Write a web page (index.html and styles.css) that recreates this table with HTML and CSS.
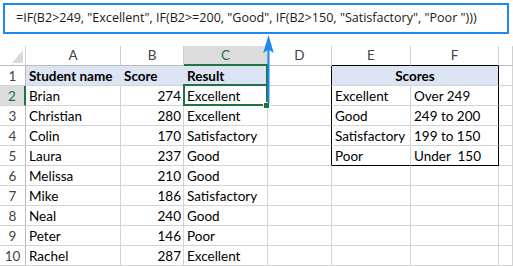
FILE: index.html
```html
<!DOCTYPE html>
<html>
<head>
<meta charset="utf-8">
<link rel="stylesheet" href="styles.css">
</head>
<body>
<div class="page">
  <div class="formula">=IF(B2&gt;249, "Excellent", IF(B2&gt;=200, "Good", IF(B2&gt;150, "Satisfactory", "Poor ")))</div>
  <div class="sheet">
    <div class="c hd corner"><span class="tri"></span></div>
    <div class="c hd">A</div>
    <div class="c hd">B</div>
    <div class="c hd sel-h">C</div>
    <div class="c hd">D</div>
    <div class="c hd bx-b">E</div>
    <div class="c hd bx-b">F</div>
    <div class="c hd"></div>

    <div class="c rh">1</div>
    <div class="c fill b nr">Student name</div>
    <div class="c fill b nr">Score</div>
    <div class="c fill b">Result</div>
    <div class="c bx-r"></div>
    <div class="c fill b ctr span2 bx-r">Scores</div>
    <div class="c"></div>

    <div class="c rh sel-r">2</div>
    <div class="c">Brian</div>
    <div class="c num">274</div>
    <div class="c">Excellent</div>
    <div class="c bx-r"></div>
    <div class="c">Excellent</div>
    <div class="c bx-r">Over 249</div>
    <div class="c"></div>

    <div class="c rh">3</div>
    <div class="c">Christian</div>
    <div class="c num">280</div>
    <div class="c">Excellent</div>
    <div class="c bx-r"></div>
    <div class="c">Good</div>
    <div class="c bx-r">249 to 200</div>
    <div class="c"></div>

    <div class="c rh">4</div>
    <div class="c">Colin</div>
    <div class="c num">170</div>
    <div class="c">Satisfactory</div>
    <div class="c bx-r"></div>
    <div class="c">Satisfactory</div>
    <div class="c bx-r">199 to 150</div>
    <div class="c"></div>

    <div class="c rh">5</div>
    <div class="c">Laura</div>
    <div class="c num">237</div>
    <div class="c">Good</div>
    <div class="c bx-r"></div>
    <div class="c bx-b">Poor</div>
    <div class="c bx-r bx-b">Under  150</div>
    <div class="c"></div>

    <div class="c rh">6</div>
    <div class="c">Melissa</div>
    <div class="c num">210</div>
    <div class="c">Good</div>
    <div class="c"></div>
    <div class="c"></div>
    <div class="c"></div>
    <div class="c"></div>

    <div class="c rh">7</div>
    <div class="c">Mike</div>
    <div class="c num">186</div>
    <div class="c">Satisfactory</div>
    <div class="c"></div>
    <div class="c"></div>
    <div class="c"></div>
    <div class="c"></div>

    <div class="c rh">8</div>
    <div class="c">Neal</div>
    <div class="c num">240</div>
    <div class="c">Good</div>
    <div class="c"></div>
    <div class="c"></div>
    <div class="c"></div>
    <div class="c"></div>

    <div class="c rh">9</div>
    <div class="c">Peter</div>
    <div class="c num">146</div>
    <div class="c">Poor</div>
    <div class="c"></div>
    <div class="c"></div>
    <div class="c"></div>
    <div class="c"></div>

    <div class="c rh">10</div>
    <div class="c">Rachel</div>
    <div class="c num">287</div>
    <div class="c">Excellent</div>
    <div class="c"></div>
    <div class="c"></div>
    <div class="c"></div>
    <div class="c"></div>
  </div>

  <div class="sel-edge"></div>
  <div class="selection"><span class="handle"></span></div>
  <svg class="arrow" width="18" height="72" viewBox="0 0 18 72">
    <path d="M8.5 2 L13.8 20 L8.5 16.5 L3.2 20 Z" fill="#1e88ee"/>
    <rect x="7.5" y="15" width="2" height="55" fill="#1e88ee"/>
  </svg>
</div>
</body>
</html>
```
FILE: styles.css
```css
* { box-sizing: border-box; }
html, body { margin: 0; padding: 0; background: #fff; }
.page {
  position: relative;
  width: 513px;
  height: 266px;
  overflow: hidden;
}
.formula {
  margin: 3px 4px 0 3px;
  height: 31px;
  border: 2px solid #1e88ee;
  padding: 0 0 0 11px;
  font-family: "Open Sans", "Noto Sans", sans-serif;
  font-size: 12.55px;
  line-height: 26px;
  color: #1a1a1a;
  white-space: pre;
}
.sheet {
  margin-top: 12px;
  display: grid;
  grid-template-columns: 26px 95px 63px 84px 64px 79px 88px 14px;
  grid-auto-rows: 20px;
  font-family: Lato, "Liberation Sans", sans-serif;
  font-size: 13.5px;
  color: #000;
}
.c {
  border-right: 1px solid #d4d4d4;
  border-bottom: 1px solid #d4d4d4;
  padding: 2px 0 0 3px;
  line-height: 17px;
  white-space: pre;
  overflow: hidden;
}
.hd {
  text-align: center;
  padding: 1px 0 0 0;
  color: #444;
  border-right-color: #cfcfcf;
  border-bottom-color: #bdbdbd;
}
.corner {
  display: flex;
  justify-content: flex-end;
  align-items: flex-end;
  padding: 0 2px 2px 0;
}
.tri {
  width: 0;
  height: 0;
  border-left: 11px solid transparent;
  border-bottom: 13px solid #dadada;
}
.rh {
  text-align: center;
  padding: 2px 0 0 0;
  color: #444;
  border-right-color: #bdbdbd;
}
.sel-h {
  background: #dcdcdc;
  color: #217346;
  border-bottom: 2px solid #217346;
}
.sel-r {
  background: #dcdcdc;
  color: #217346;
  border-right: 2px solid #217346;
}
.fill { background: #dce3f2; }
.nr { border-right-color: #dce3f2; }
.b { font-weight: bold; }
.ctr { text-align: center; padding-left: 0; }
.num { text-align: right; padding: 2px 2px 0 0; }
.span2 { grid-column: span 2; }
.bx-r { border-right-color: #000; }
.bx-b { border-bottom-color: #000; }

.selection {
  position: absolute;
  left: 183px;
  top: 84px;
  width: 85px;
  height: 22px;
  border: 2px solid #217346;
}
.sel-edge {
  position: absolute;
  left: 266px;
  top: 64px;
  width: 2px;
  height: 21px;
  background: #217346;
}
.handle {
  position: absolute;
  right: -4px;
  bottom: -5px;
  width: 7px;
  height: 7px;
  background: #217346;
  border: 1px solid #fff;
}
.arrow {
  position: absolute;
  left: 260px;
  top: 33px;
}
```
